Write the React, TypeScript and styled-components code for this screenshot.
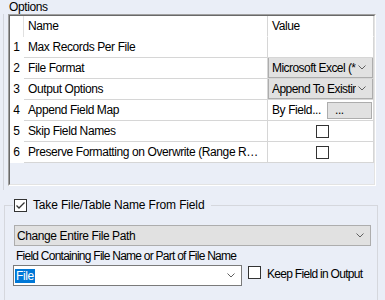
import React from 'react';
import styled, { createGlobalStyle } from 'styled-components';

const Global = createGlobalStyle`
  html, body { margin: 0; padding: 0; background: #eaeef7; }
  body {
    font-family: "Liberation Sans", Arial, sans-serif;
    font-size: 12px;
    letter-spacing: -0.4px;
    color: #000;
  }
  * { box-sizing: border-box; }
`;

const Page = styled.div`
  width: 385px;
  height: 300px;
  overflow: hidden;
  background: #eaeef7;
  display: flex;
  flex-direction: column;
  & > * { flex-shrink: 0; }
`;

const SectionTitle = styled.div`
  height: 14px;
  line-height: 14px;
  padding-left: 9px;
`;

const OptionsPanel = styled.div`
  margin-left: 3px;
  height: 176px;
  border-left: 1px solid #d3d6dd;
  padding-left: 4px;
`;

const GridFrame = styled.div`
  width: 368px;
  height: 172px;
  border-style: solid;
  border-width: 1px;
  border-color: #a0a0a0 #ffffff #ffffff #a0a0a0;
`;

const GridInner = styled.div`
  height: 100%;
  border-style: solid;
  border-width: 1px;
  border-color: #696969 #e3e3e3 #e3e3e3 #696969;
  background: #eaeef7;
  display: flex;
  flex-direction: column;
`;

const Row = styled.div`
  display: grid;
  grid-template-columns: 14px 244px 106px;
  height: 21px;
  flex: none;
  background: #fff;
`;

const NumCell = styled.div<{ $header?: boolean }>`
  text-align: center;
  line-height: 20px;
  border-right: 1px solid ${p => (p.$header ? '#e0e0e0' : 'transparent')};
`;

const Cell = styled.div<{ $header?: boolean }>`
  display: flex;
  align-items: center;
  min-width: 0;
  padding-left: 4px;
  border-right: 1px solid #d6d6d6;
  border-bottom: 1px solid ${p => (p.$header ? 'transparent' : '#d6d6d6')};
  white-space: nowrap;
  overflow: hidden;
`;

const HeaderText = styled.span`
  align-self: flex-start;
  margin-top: 3px;
`;

const Ellipsis = styled.span`
  overflow: hidden;
  text-overflow: ellipsis;
  padding-right: 6px;
`;

const ValueCell = styled(Cell)<{ $center?: boolean; $bare?: boolean }>`
  padding-left: ${p => (p.$bare ? 0 : 4)}px;
  justify-content: ${p => (p.$center ? 'center' : 'flex-start')};
  align-items: ${p => (p.$bare ? 'stretch' : 'center')};
`;

const CellCombo = styled.div`
  flex: 1;
  display: flex;
  align-items: center;
  background: #e1e1e1;
  border: 1px solid #adadad;
  margin-top: -1px;
  padding-left: 3px;
  min-width: 0;
  letter-spacing: -0.55px;
`;

const ComboText = styled.span`
  flex: 1;
  overflow: hidden;
  white-space: nowrap;
`;

const Chevron = styled.svg`
  flex: none;
  width: 8px;
  height: 5px;
  margin: 0 6px 0 2px;
`;

const FieldMapText = styled.span`
  flex: 1;
`;

const DotsButton = styled.div`
  width: 45px;
  height: 17px;
  margin-right: 1px;
  background: #e1e1e1;
  border: 1px solid #adadad;
  padding-left: 7px;
  line-height: 14px;
`;

const Box = styled.span`
  display: inline-flex;
  flex: none;
  width: 13px;
  height: 13px;
  border: 1px solid #333;
  background: #fff;
`;

const Fieldset = styled.fieldset`
  margin: 9px 0 0 4px;
  width: 374px;
  border: 1px solid #d5d7dd;
  padding: 0 9px 20px 9px;
  min-width: 0;
`;

const Legend = styled.legend`
  margin-left: -1px;
  padding: 0 7px 0 1px;
  display: flex;
  align-items: center;
  height: 13px;
`;

const LegendLabel = styled.span`
  margin-left: 6px;
  line-height: 13px;
  letter-spacing: -0.15px;
`;

const DropDown = styled.div`
  margin-top: 13px;
  width: 357px;
  height: 21px;
  display: flex;
  align-items: center;
  background: #e1e1e1;
  border: 1px solid #adadad;
  padding-left: 2px;
`;

const FieldLabel = styled.div`
  margin-top: 3px;
  padding-left: 2px;
  line-height: 14px;
  letter-spacing: -0.75px;
  white-space: nowrap;
`;

const InputRow = styled.div`
  margin-top: 2px;
  display: flex;
  align-items: flex-start;
  white-space: nowrap;
`;

const Combo = styled.div`
  margin-left: -1px;
  width: 229px;
  height: 21px;
  flex: none;
  display: flex;
  align-items: center;
  background: #fff;
  border: 1px solid #7a7a7a;
  padding-left: 1px;
`;

const Selected = styled.span`
  background: #0078d7;
  color: #fff;
  padding: 0 1px;
  line-height: 14px;
`;

const Spacer = styled.span`
  flex: 1;
`;

const KeepBox = styled(Box)`
  margin: 1px 0 0 6px;
`;

const KeepLabel = styled.span`
  flex: none;
  margin-left: 6px;
  line-height: 19px;
  letter-spacing: -0.7px;
`;

const ChevronIcon = () => (
  <Chevron viewBox="0 0 8 5">
    <path d="M0.5 0.5 L4 4 L7.5 0.5" fill="none" stroke="#606060" strokeWidth="1" />
  </Chevron>
);

const CheckBox = ({ checked }: { checked?: boolean }) => (
  <Box>
    {checked && (
      <svg width="11" height="11" viewBox="0 0 11 11">
        <path d="M1.5 5.5 L4 8 L9.5 2.5" fill="none" stroke="#333" strokeWidth="1.3" />
      </svg>
    )}
  </Box>
);

export default function App() {
  return (
    <Page>
      <Global />
      <SectionTitle>Options</SectionTitle>
      <OptionsPanel>
        <GridFrame>
          <GridInner>
            <Row>
              <NumCell $header />
              <Cell $header><HeaderText>Name</HeaderText></Cell>
              <Cell $header><HeaderText>Value</HeaderText></Cell>
            </Row>
            <Row>
              <NumCell>1</NumCell>
              <Cell>Max Records Per File</Cell>
              <ValueCell />
            </Row>
            <Row>
              <NumCell>2</NumCell>
              <Cell>File Format</Cell>
              <ValueCell $bare>
                <CellCombo>
                  <ComboText>Microsoft Excel (*.xlsx)</ComboText>
                  <ChevronIcon />
                </CellCombo>
              </ValueCell>
            </Row>
            <Row>
              <NumCell>3</NumCell>
              <Cell>Output Options</Cell>
              <ValueCell $bare>
                <CellCombo>
                  <ComboText>Append To Existing Sheet</ComboText>
                  <ChevronIcon />
                </CellCombo>
              </ValueCell>
            </Row>
            <Row>
              <NumCell>4</NumCell>
              <Cell>Append Field Map</Cell>
              <ValueCell>
                <FieldMapText>By Field...</FieldMapText>
                <DotsButton>...</DotsButton>
              </ValueCell>
            </Row>
            <Row>
              <NumCell>5</NumCell>
              <Cell>Skip Field Names</Cell>
              <ValueCell $center>
                <CheckBox />
              </ValueCell>
            </Row>
            <Row>
              <NumCell>6</NumCell>
              <Cell><Ellipsis>Preserve Formatting on Overwrite (Range Ref Required)</Ellipsis></Cell>
              <ValueCell $center>
                <CheckBox />
              </ValueCell>
            </Row>
          </GridInner>
        </GridFrame>
      </OptionsPanel>
      <Fieldset>
        <Legend>
          <CheckBox checked />
          <LegendLabel>Take File/Table Name From Field</LegendLabel>
        </Legend>
        <DropDown>
          <ComboText>Change Entire File Path</ComboText>
          <ChevronIcon />
        </DropDown>
        <FieldLabel>Field Containing File Name or Part of File Name</FieldLabel>
        <InputRow>
          <Combo>
            <Selected>File</Selected>
            <Spacer />
            <ChevronIcon />
          </Combo>
          <KeepBox />
          <KeepLabel>Keep Field in Output</KeepLabel>
        </InputRow>
      </Fieldset>
    </Page>
  );
}
